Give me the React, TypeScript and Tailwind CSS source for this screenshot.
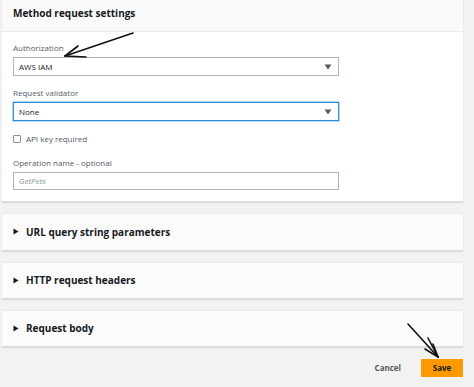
import React from "react";

function Tri() {
  return (
    <svg width="6" height="7" viewBox="0 0 6 7" className="shrink-0">
      <polygon points="0.5,0.5 5.5,3.5 0.5,6.5" fill="#16191f" />
    </svg>
  );
}

function Caret() {
  return (
    <svg width="8" height="6" viewBox="0 0 8 6">
      <polygon points="0.5,0.5 7.5,0.5 4,5.5" fill="#545b64" />
    </svg>
  );
}

function Collapsed({ title, h }: { title: string; h: string }) {
  return (
    <div className={`bg-[#fbfbfb] ${h} flex items-center pl-[11px] gap-[7px] pb-[1px] border-b-2 border-[#dcdcdc] shadow-[0_0_1px_rgba(0,0,0,0.15)]`}>
      <Tri />
      <span className="text-[10px] font-bold text-[#16191f] leading-none">{title}</span>
    </div>
  );
}

export default function App() {
  return (
    <div
      className="w-[474px] h-[387px] bg-[#f2f2f2] relative overflow-hidden"
      style={{ fontFamily: '"Open Sans", "Liberation Sans", sans-serif' }}
    >
      <div className="pl-[2px] pr-[11px] flex flex-col">
        {/* Panel 1 */}
        <div className="bg-white border-b-2 border-[#dcdcdc] shadow-[0_0_1px_rgba(0,0,0,0.15)]">
          <div className="h-[32px] bg-[#fafafa] border-b border-[#eaeded] flex items-center pl-[11px] pb-[6px]">
            <span className="text-[10px] font-bold text-[#16191f] leading-none">Method request settings</span>
          </div>
          <div className="pl-[11px] pt-[10px] pb-[11px]">
            <div className="h-[12px] leading-[12px] text-[8px] text-[#545b64] mb-[3px]">Authorization</div>
            <div className="w-[326px] h-[19px] border border-[#aab7b8] flex items-center justify-between pl-[5px] pr-[6px]">
              <span className="text-[8px] text-[#16191f]">AWS IAM</span>
              <Caret />
            </div>
            <div className="h-[12px] leading-[12px] text-[8px] text-[#545b64] mt-[11px] mb-[3px]">Request validator</div>
            <div className="w-[326px] h-[19px] border border-[#2a8ed6] shadow-[0_0_0_1px_rgba(42,142,214,0.35)] flex items-center justify-between pl-[5px] pr-[6px]">
              <span className="text-[8px] text-[#16191f]">None</span>
              <Caret />
            </div>
            <div className="h-[12px] mt-[12px] flex items-center gap-[5px]">
              <div className="w-[8px] h-[8px] border border-[#8d9696] rounded-[1px] bg-white" />
              <span className="text-[8px] text-[#545b64] leading-none">API key required</span>
            </div>
            <div className="h-[12px] leading-[12px] text-[8px] text-[#545b64] mt-[12px] mb-[3px]">Operation name - optional</div>
            <div className="w-[326px] h-[18px] border border-[#aab7b8] flex items-center pl-[5px]">
              <span className="text-[8px] italic text-[#879596]">GetPets</span>
            </div>
          </div>
        </div>

        <div className="mt-[11px]">
          <Collapsed title="URL query string parameters" h="h-[38px]" />
        </div>
        <div className="mt-[11px]">
          <Collapsed title="HTTP request headers" h="h-[37px]" />
        </div>
        <div className="mt-[11px]">
          <Collapsed title="Request body" h="h-[37px]" />
        </div>

        <div className="mt-[11px] flex items-center justify-end gap-[20px]">
          <span className="text-[8px] font-bold text-[#545b64]">Cancel</span>
          <div className="w-[42px] h-[18px] bg-[#ff9900] flex items-center justify-center">
            <span className="text-[8px] font-bold text-[#16191f]">Save</span>
          </div>
        </div>
      </div>

      {/* annotation arrows */}
      <svg className="absolute left-0 top-0 pointer-events-none" width="474" height="387" viewBox="0 0 474 387">
        <g stroke="#111" strokeWidth="1.6" fill="none" strokeLinecap="round" strokeLinejoin="round">
          <line x1="133" y1="33" x2="65" y2="56" />
          <line x1="65" y1="56" x2="78" y2="46" />
          <line x1="65" y1="56" x2="86" y2="57" />
          <line x1="408" y1="324" x2="438" y2="357" />
          <line x1="438" y1="357" x2="428" y2="338" />
          <line x1="438" y1="357" x2="433" y2="344" />
          <line x1="438" y1="357" x2="425" y2="349" />
        </g>
      </svg>
    </div>
  );
}
